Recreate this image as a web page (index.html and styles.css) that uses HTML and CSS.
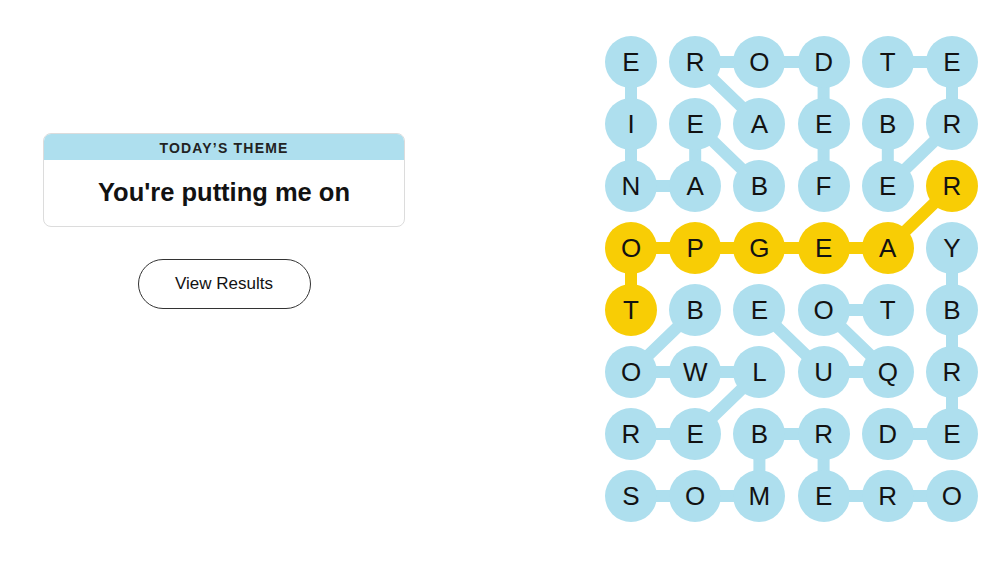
FILE: index.html
```html
<!DOCTYPE html>
<html lang="en">
<head>
<meta charset="utf-8">
<title>Strands</title>
<link rel="stylesheet" href="styles.css">
</head>
<body>
<main class="game">
  <section class="side">
    <div class="theme-card">
      <div class="theme-label">Today’s Theme</div>
      <div class="theme-clue">You're putting me on</div>
    </div>
    <button class="results-btn" type="button">View Results</button>
  </section>
  <section class="board">
    <svg class="links" viewBox="0 0 373 486" width="373" height="486" aria-hidden="true">
      <g class="theme-links">
        <polyline points="154.4,150 90.2,88 90.2,150 26,150 26,88 26,26"/>
        <polyline points="218.6,150 218.6,88 218.6,26 154.4,26 90.2,26 154.4,88"/>
        <polyline points="282.8,88 282.8,150 347,88 347,26 282.8,26"/>
        <polyline points="282.8,398 347,398 347,336 347,274 347,212"/>
        <polyline points="90.2,274 26,336 90.2,336 154.4,336 90.2,398 26,398"/>
        <polyline points="282.8,274 218.6,274 282.8,336 218.6,336 154.4,274"/>
        <polyline points="26,460 90.2,460 154.4,460 154.4,398 218.6,398 218.6,460 282.8,460 347,460"/>
      </g>
      <g class="span-links">
        <polyline points="26,274 26,212 90.2,212 154.4,212 218.6,212 282.8,212 347,150"/>
      </g>
    </svg>
    <div class="grid">
      <div class="cell theme">E</div><div class="cell theme">R</div><div class="cell theme">O</div><div class="cell theme">D</div><div class="cell theme">T</div><div class="cell theme">E</div>
      <div class="cell theme">I</div><div class="cell theme">E</div><div class="cell theme">A</div><div class="cell theme">E</div><div class="cell theme">B</div><div class="cell theme">R</div>
      <div class="cell theme">N</div><div class="cell theme">A</div><div class="cell theme">B</div><div class="cell theme">F</div><div class="cell theme">E</div><div class="cell span">R</div>
      <div class="cell span">O</div><div class="cell span">P</div><div class="cell span">G</div><div class="cell span">E</div><div class="cell span">A</div><div class="cell theme">Y</div>
      <div class="cell span">T</div><div class="cell theme">B</div><div class="cell theme">E</div><div class="cell theme">O</div><div class="cell theme">T</div><div class="cell theme">B</div>
      <div class="cell theme">O</div><div class="cell theme">W</div><div class="cell theme">L</div><div class="cell theme">U</div><div class="cell theme">Q</div><div class="cell theme">R</div>
      <div class="cell theme">R</div><div class="cell theme">E</div><div class="cell theme">B</div><div class="cell theme">R</div><div class="cell theme">D</div><div class="cell theme">E</div>
      <div class="cell theme">S</div><div class="cell theme">O</div><div class="cell theme">M</div><div class="cell theme">E</div><div class="cell theme">R</div><div class="cell theme">O</div>
    </div>
  </section>
</main>
</body>
</html>
```
FILE: styles.css
```css
* { box-sizing: border-box; }

html, body {
  margin: 0;
  padding: 0;
  background: #ffffff;
  color: #121212;
  font-family: "Liberation Sans", Arial, sans-serif;
}

.game {
  display: flex;
  width: 1000px;
  height: 562px;
}

.side {
  width: 448px;
  display: flex;
  flex-direction: column;
  align-items: center;
  padding-top: 133px;
}

.theme-card {
  width: 362px;
  height: 94px;
  border: 1px solid #dcdcdc;
  border-radius: 8px;
  overflow: hidden;
  display: flex;
  flex-direction: column;
}

.theme-label {
  height: 26px;
  background: #aedfee;
  display: flex;
  align-items: center;
  justify-content: center;
  font-size: 14px;
  font-weight: 700;
  letter-spacing: 1.2px;
  text-transform: uppercase;
  color: #222;
  padding-top: 1px;
}

.theme-clue {
  flex: 1;
  display: flex;
  align-items: center;
  justify-content: center;
  font-size: 25.5px;
  font-weight: 700;
  color: #121212;
  padding-bottom: 2px;
}

.results-btn {
  margin-top: 32px;
  width: 173px;
  height: 50px;
  border: 1px solid #333;
  border-radius: 25px;
  background: #fff;
  font-family: "Liberation Sans", Arial, sans-serif;
  font-size: 17px;
  color: #121212;
  padding: 0;
}

.board {
  position: relative;
  margin-left: 157px;
  margin-top: 36px;
  width: 373px;
  height: 486px;
}

.links {
  position: absolute;
  left: 0;
  top: 0;
}

.links polyline {
  fill: none;
  stroke-width: 12;
  stroke-linejoin: round;
}

.theme-links polyline { stroke: #aedfee; }
.span-links polyline { stroke: #f8cd05; }

.grid {
  position: relative;
  display: grid;
  grid-template-columns: repeat(6, 52px);
  grid-template-rows: repeat(8, 52px);
  column-gap: 12.2px;
  row-gap: 10px;
}

.cell {
  width: 52px;
  height: 52px;
  border-radius: 50%;
  display: flex;
  align-items: center;
  justify-content: center;
  font-size: 26px;
  color: #121212;
  padding-top: 1px;
}

.cell.theme { background: #aedfee; }
.cell.span { background: #f8cd05; }
```
